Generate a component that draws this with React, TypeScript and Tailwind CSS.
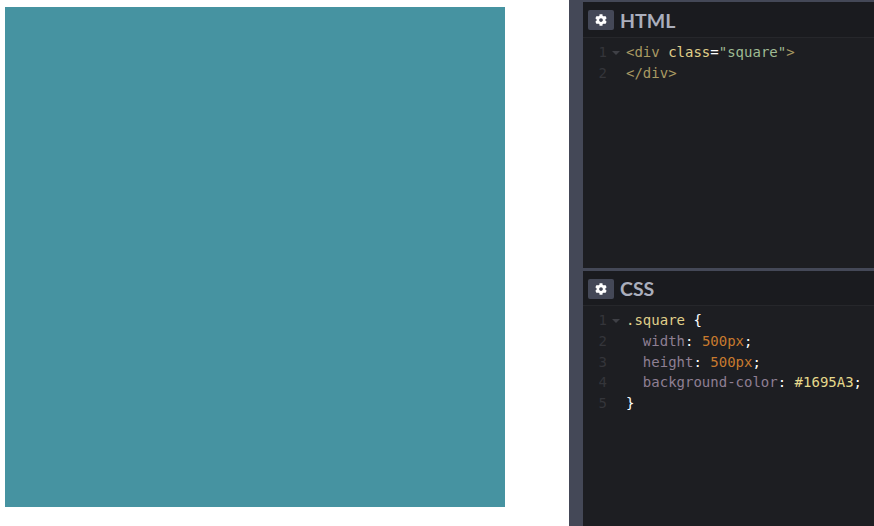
import { FaCog } from "react-icons/fa";

const gutterNums = "w-[25px] pr-[1px] text-right text-[#34353a]";

function Tok({ c, children }: { c: string; children: React.ReactNode }) {
  return <span style={{ color: c }}>{children}</span>;
}

function Line({ n, fold, children }: { n: number; fold?: boolean; children?: React.ReactNode }) {
  return (
    <div className="flex h-[20.8px] items-center">
      <div className={gutterNums}>{n}</div>
      <div className="flex w-[18px] justify-start pl-[4px]">
        {fold && <div className="mt-[1px] h-0 w-0 border-x-[4px] border-t-[4px] border-x-transparent border-t-[#3f4046]" />}
      </div>
      <div className="whitespace-pre">{children}</div>
    </div>
  );
}

function PanelHead({ title, tall }: { title: string; tall?: boolean }) {
  return (
    <div className={tall ? "flex h-[36px] items-center border-b border-[#26272b] bg-[#1a1b1f] pl-[5px] pt-[1px]" : "flex h-[35px] items-center border-b border-[#26272b] bg-[#1a1b1f] pl-[5px] pt-[2px]"}>
      <div className="flex h-[20px] w-[26px] items-center justify-center rounded-[2px] bg-[#444857] text-white">
        <FaCog className="text-[12px]" />
      </div>
      <div className={tall ? "ml-[6px] mt-[2px] font-['Lato','Liberation_Sans',sans-serif] text-[19.5px] font-bold text-[#aaaebc]" : "ml-[6px] font-['Lato','Liberation_Sans',sans-serif] text-[19.5px] font-bold text-[#aaaebc]"}>{title}</div>
    </div>
  );
}

export default function App() {
  const tag = "#a99a62";
  const attr = "#e0d08a";
  const str = "#9fbb94";
  const prop = "#8e7f93";
  const num = "#c87a2e";
  const hex = "#e6d98c";
  const white = "#ffffff";
  return (
    <div className="flex h-[526px] w-[874px] overflow-hidden bg-white">
      <div className="w-[569px] pl-[5px] pt-[7px]">
        <div className="h-[500px] w-[500px] bg-[#4693a1]" />
      </div>
      <div className="flex w-[305px] flex-col border-l-[14px] border-t-2 border-[#444857]">
        <div className="flex h-[266px] flex-col bg-[#1d1e22]">
          <PanelHead title="HTML" tall />
          <div className="pt-[4px] font-['DejaVu_Sans_Mono',monospace] text-[14px]">
            <Line n={1} fold>
              <Tok c={tag}>&lt;div</Tok> <Tok c={attr}>class</Tok>
              <Tok c={white}>=</Tok>
              <Tok c={str}>"square"</Tok>
              <Tok c={tag}>&gt;</Tok>
            </Line>
            <Line n={2}>
              <Tok c={tag}>&lt;/div&gt;</Tok>
            </Line>
          </div>
        </div>
        <div className="h-[3px] bg-[#444857]" />
        <div className="flex flex-1 flex-col bg-[#1d1e22]">
          <PanelHead title="CSS" />
          <div className="pt-[4px] font-['DejaVu_Sans_Mono',monospace] text-[14px]">
            <Line n={1} fold>
              <Tok c={attr}>.square</Tok> <Tok c={white}>{"{"}</Tok>
            </Line>
            <Line n={2}>
              {"  "}
              <Tok c={prop}>width</Tok>
              <Tok c={white}>:</Tok> <Tok c={num}>500px</Tok>
              <Tok c={white}>;</Tok>
            </Line>
            <Line n={3}>
              {"  "}
              <Tok c={prop}>height</Tok>
              <Tok c={white}>:</Tok> <Tok c={num}>500px</Tok>
              <Tok c={white}>;</Tok>
            </Line>
            <Line n={4}>
              {"  "}
              <Tok c={prop}>background-color</Tok>
              <Tok c={white}>:</Tok> <Tok c={hex}>#1695A3</Tok>
              <Tok c={white}>;</Tok>
            </Line>
            <Line n={5}>
              <Tok c={white}>{"}"}</Tok>
            </Line>
          </div>
        </div>
      </div>
    </div>
  );
}
